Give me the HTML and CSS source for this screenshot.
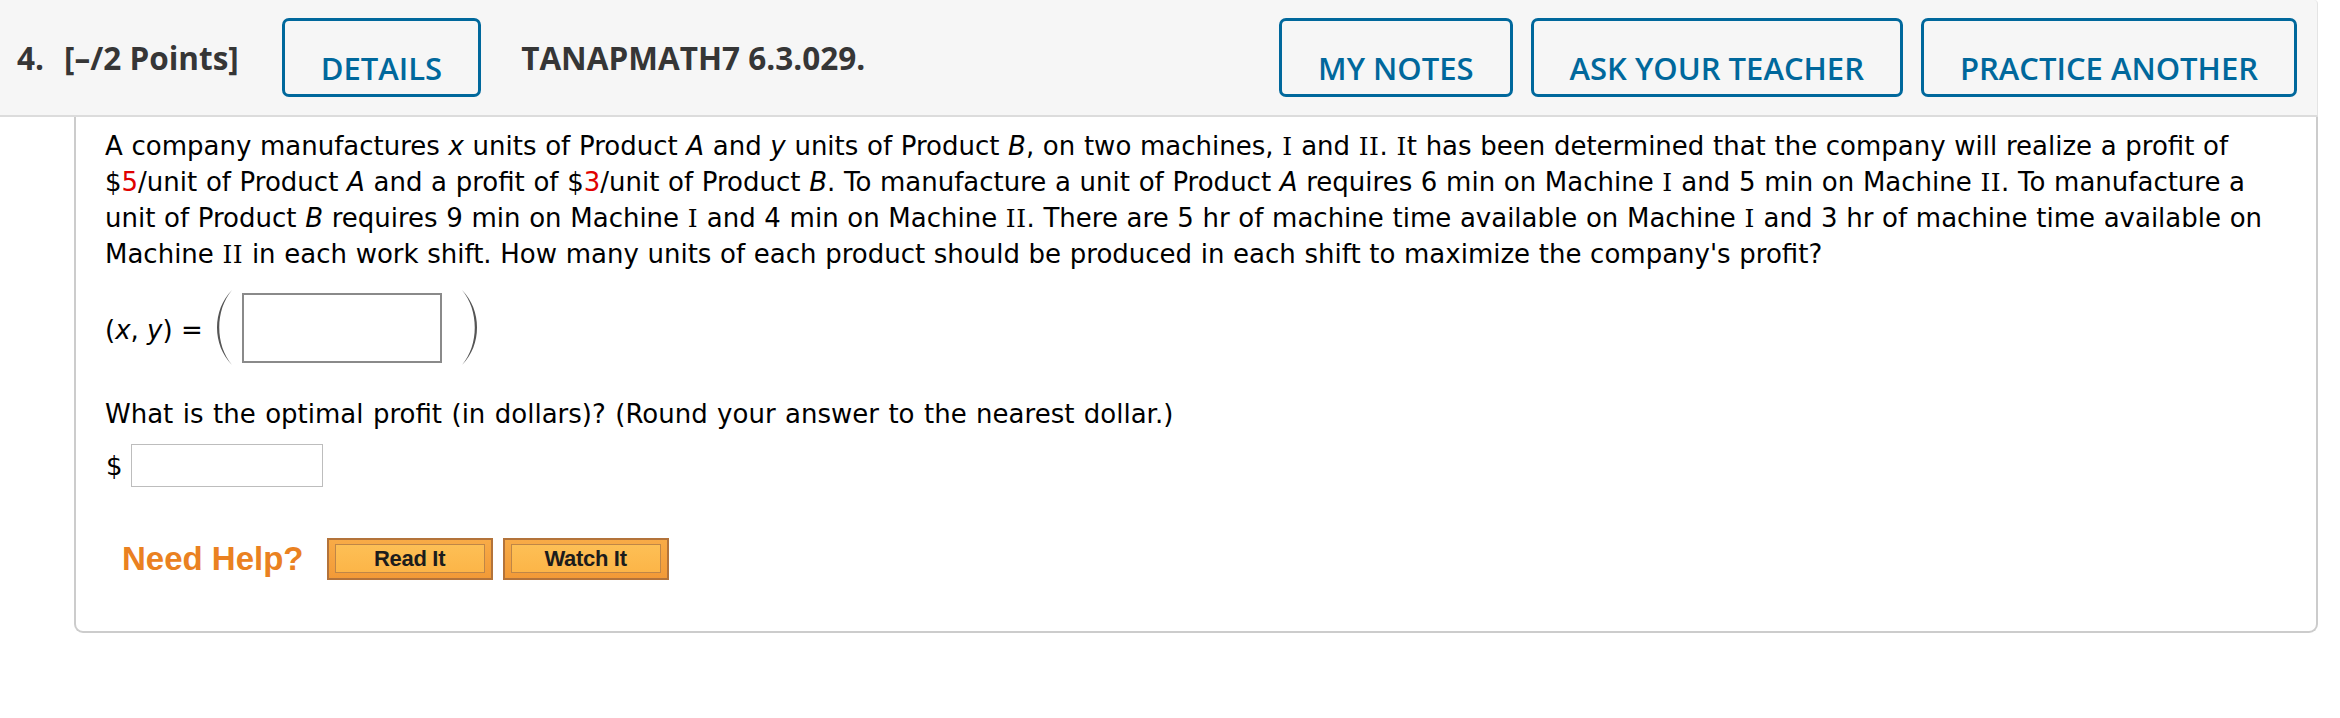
FILE: index.html
```html
<!DOCTYPE html>
<html lang="en">
<head>
<meta charset="utf-8">
<title>Question 4</title>
<link rel="stylesheet" href="styles.css">
</head>
<body>
<div class="question">
  <div class="qhead">
    <span class="qnum">4.</span>
    <span class="qpts">[&ndash;/2 Points]</span>
    <button class="hbtn details">DETAILS</button>
    <span class="qcode">TANAPMATH7 6.3.029.</span>
    <div class="hactions">
      <button class="hbtn">MY NOTES</button>
      <button class="hbtn">ASK YOUR TEACHER</button>
      <button class="hbtn">PRACTICE ANOTHER</button>
    </div>
  </div>
  <div class="qbody">
    <p class="stem">A company manufactures <i>x</i> units of Product <i>A</i> and <i>y</i> units of Product <i>B</i>, on two machines, <span class="rn">I</span> and <span class="rn">II</span>. <span class="rn">I</span>t has been determined that the company will realize a profit of<br>$<span class="red">5</span>/unit of Product <i>A</i> and a profit of $<span class="red">3</span>/unit of Product <i>B</i>. To manufacture a unit of Product <i>A</i> requires 6 min on Machine <span class="rn">I</span> and 5 min on Machine <span class="rn">II</span>. To manufacture a<br>unit of Product <i>B</i> requires 9 min on Machine <span class="rn">I</span> and 4 min on Machine <span class="rn">II</span>. There are 5 hr of machine time available on Machine <span class="rn">I</span> and 3 hr of machine time available on<br>Machine <span class="rn">II</span> in each work shift. How many units of each product should be produced in each shift to maximize the company's profit?</p>
    <div class="ans-row">
      <span class="ans-label">(<i>x</i>, <i>y</i>) =</span>
      <svg class="paren" width="17" height="75" viewBox="0 0 17 75"><path d="M16 0 C-4 20 -4 55 16 75 C-1 55 -1 20 16 0 Z" fill="#555"/></svg>
      <span class="box-input"></span>
      <svg class="paren rparen" width="17" height="75" viewBox="0 0 17 75"><path d="M1 0 C21 20 21 55 1 75 C18 55 18 20 1 0 Z" fill="#555"/></svg>
    </div>
    <p class="q2">What is the optimal profit (in dollars)? (Round your answer to the nearest dollar.)</p>
    <div class="dollar-row">
      <span class="dollar">$</span>
      <span class="money-input"></span>
    </div>
    <div class="help-row">
      <span class="need-help">Need Help?</span>
      <span class="hb"><span class="hb-inner">Read It</span></span>
      <span class="hb"><span class="hb-inner">Watch It</span></span>
    </div>
  </div>
</div>
</body>
</html>
```

FILE: styles.css
```css
html, body {
  margin: 0;
  padding: 0;
  background: #fff;
}

.question {
  width: 2318px;
}

.qhead {
  box-sizing: border-box;
  height: 117px;
  display: flex;
  align-items: center;
  padding: 0 20px 0 17px;
  background: #f6f6f6;
  border-bottom: 2px solid #dcdcdc;
  border-right: 1px solid #e4e4e4;
  border-top-right-radius: 4px;
  font-family: "Open Sans", "Liberation Sans", sans-serif;
}

.qnum, .qpts, .qcode {
  font-size: 31.5px;
  font-weight: 700;
  color: #363636;
  line-height: 40px;
}

.qpts {
  margin-left: 20px;
}

.details {
  margin-left: 43px;
  margin-right: 40px;
  padding-left: 34px;
  padding-right: 34px;
}

.hbtn {
  display: block;
  box-sizing: border-box;
  margin-top: 0;
  margin-bottom: 0;
  padding: 26px 36px 5px;
  border: 3px solid #00689c;
  border-radius: 7px;
  background: transparent;
  color: #00689c;
  font-family: "Open Sans", "Liberation Sans", sans-serif;
  font-size: 31px;
  font-weight: 600;
  line-height: 42px;
  white-space: nowrap;
}

.hactions {
  margin-left: auto;
  display: flex;
  gap: 18px;
}

.qbody {
  box-sizing: border-box;
  margin-left: 74px;
  width: 2244px;
  height: 516px;
  padding: 11px 0 0 29px;
  border: 2px solid #cccccc;
  border-top: none;
  border-radius: 0 0 9px 9px;
  font-family: "DejaVu Sans", Verdana, sans-serif;
  font-size: 26px;
  color: #000;
}

.stem {
  margin: 0;
  line-height: 36px;
  white-space: nowrap;
  word-spacing: 0.4px;
}

.rn {
  font-family: "DejaVu Serif", "Liberation Serif", serif;
  font-size: 0.96em;
  letter-spacing: 0.5px;
  line-height: 0;
}

.red {
  color: #e00000;
}

.ans-row {
  margin-top: 18px;
  display: flex;
  align-items: center;
  height: 75px;
}

.ans-label {
  line-height: 36px;
  padding-top: 5px;
  margin-right: 13px;
}

.paren {
  display: block;
  flex: none;
}

.box-input {
  display: block;
  box-sizing: border-box;
  width: 200px;
  height: 70px;
  margin-left: 9px;
  margin-right: 19px;
  border: 2px solid #8a8a8a;
  background: #fff;
}

.q2 {
  margin: 31px 0 0;
  line-height: 36px;
  word-spacing: 1.2px;
}

.dollar-row {
  margin-top: 12px;
  display: flex;
  align-items: center;
  height: 43px;
}

.dollar {
  line-height: 36px;
  margin-left: 1px;
  margin-right: 8px;
}

.money-input {
  display: block;
  box-sizing: border-box;
  width: 192px;
  height: 43px;
  border: 1px solid #bdbdbd;
  background: #fff;
}

.help-row {
  margin-top: 51px;
  padding-left: 17px;
  display: flex;
  align-items: center;
  height: 42px;
  font-family: "Liberation Sans", Arial, sans-serif;
}

.need-help {
  font-size: 33px;
  font-weight: 700;
  color: #ea8121;
  margin-right: 23px;
  line-height: 40px;
}

.hb {
  box-sizing: border-box;
  display: block;
  width: 166px;
  height: 42px;
  margin-right: 10px;
  padding: 4px 6px 5px;
  border: 2px solid #b3733a;
  background: linear-gradient(#f8ab47, #f29a37);
}

.hb-inner {
  box-sizing: border-box;
  display: flex;
  align-items: center;
  justify-content: center;
  height: 100%;
  border: 1px solid #bf8647;
  background: linear-gradient(#fdbf55, #fcb548);
  font-size: 22px;
  font-weight: 700;
  color: #1c1c1c;
  letter-spacing: -0.3px;
}
```
